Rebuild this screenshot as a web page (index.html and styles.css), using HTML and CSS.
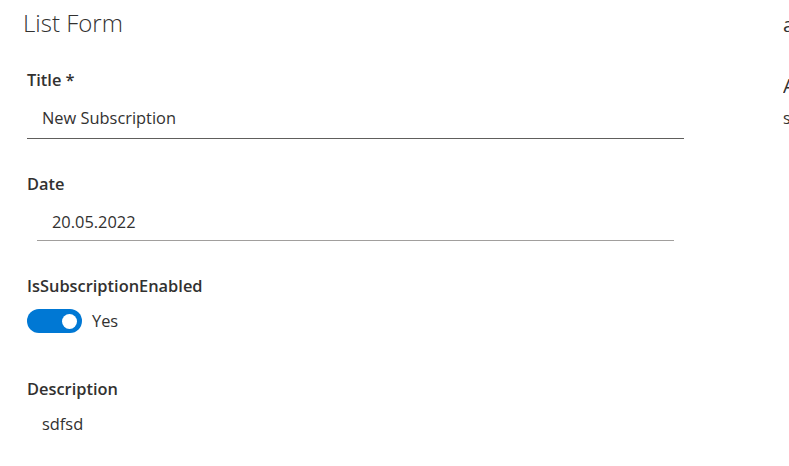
FILE: index.html
```html
<!DOCTYPE html>
<html>
<head>
<meta charset="utf-8">
<link rel="stylesheet" href="styles.css">
</head>
<body>
<div class="page">
  <main class="form">
    <h1 class="form-title">List Form</h1>
    <div class="field">
      <label class="label">Title *</label>
      <div class="textbox">New Subscription</div>
    </div>
    <div class="field">
      <label class="label">Date</label>
      <div class="datebox">20.05.2022</div>
    </div>
    <div class="field">
      <label class="label">IsSubscriptionEnabled</label>
      <div class="toggle-row">
        <span class="toggle"><span class="knob"></span></span>
        <span class="toggle-text">Yes</span>
      </div>
    </div>
    <div class="field field-desc">
      <label class="label">Description</label>
      <div class="plain">sdfsd</div>
    </div>
  </main>
  <aside class="side">
    <div class="side-a">a</div>
    <div class="side-b">A</div>
    <div class="side-c">s</div>
  </aside>
</div>
</body>
</html>
```

FILE: styles.css
```css
html, body {
  margin: 0;
  padding: 0;
  background: #ffffff;
  overflow: hidden;
}
body {
  font-family: "Open Sans", "Noto Sans", sans-serif;
  color: #323130;
  width: 789px;
  height: 466px;
}
.page {
  display: flex;
  align-items: flex-start;
}
.form {
  width: 657px;
  padding-left: 27px;
  flex: none;
}
.form-title {
  margin: 7px 0 0 -4px;
  font-size: 24px;
  font-weight: 300;
  line-height: 32px;
  color: #323130;
}
.field {
  display: flex;
  flex-direction: column;
}
.label {
  font-size: 16.4px;
  font-weight: 600;
  line-height: 22px;
  color: #323130;
}
.form-title + .field { margin-top: 30px; }
.textbox {
  margin-top: 10px;
  height: 37px;
  line-height: 34px;
  padding-left: 15px;
  font-size: 16.4px;
  border-bottom: 1.5px solid #605e5c;
}
.field + .field { margin-top: 34px; }
.datebox {
  margin: 10px 10px 0;
  height: 35px;
  line-height: 33px;
  padding-left: 15px;
  font-size: 16.4px;
  border-bottom: 1px solid #a19f9d;
}
.toggle-row {
  margin-top: 12px;
  display: flex;
  align-items: center;
  gap: 10px;
}
.toggle {
  width: 55px;
  height: 24px;
  border-radius: 12px;
  background: #0078d4;
  display: flex;
  align-items: center;
  justify-content: flex-end;
  padding-right: 5px;
  box-sizing: border-box;
}
.knob {
  width: 15px;
  height: 15px;
  border-radius: 50%;
  background: #ffffff;
}
.toggle-text {
  font-size: 16.4px;
  line-height: 24px;
}
.field + .field-desc { margin-top: 45px; }
.plain {
  margin-top: 13px;
  padding-left: 15px;
  font-size: 16.4px;
  line-height: 22px;
}
.side {
  margin-left: 99px;
  font-size: 20px;
  color: #323130;
  overflow: hidden;
}
.side-a { margin-top: 12px; line-height: 26px; }
.side-b { margin-top: 35px; line-height: 26px; font-size: 20px; }
.side-c { margin-top: 9px; line-height: 20px; font-size: 16px; }
```
